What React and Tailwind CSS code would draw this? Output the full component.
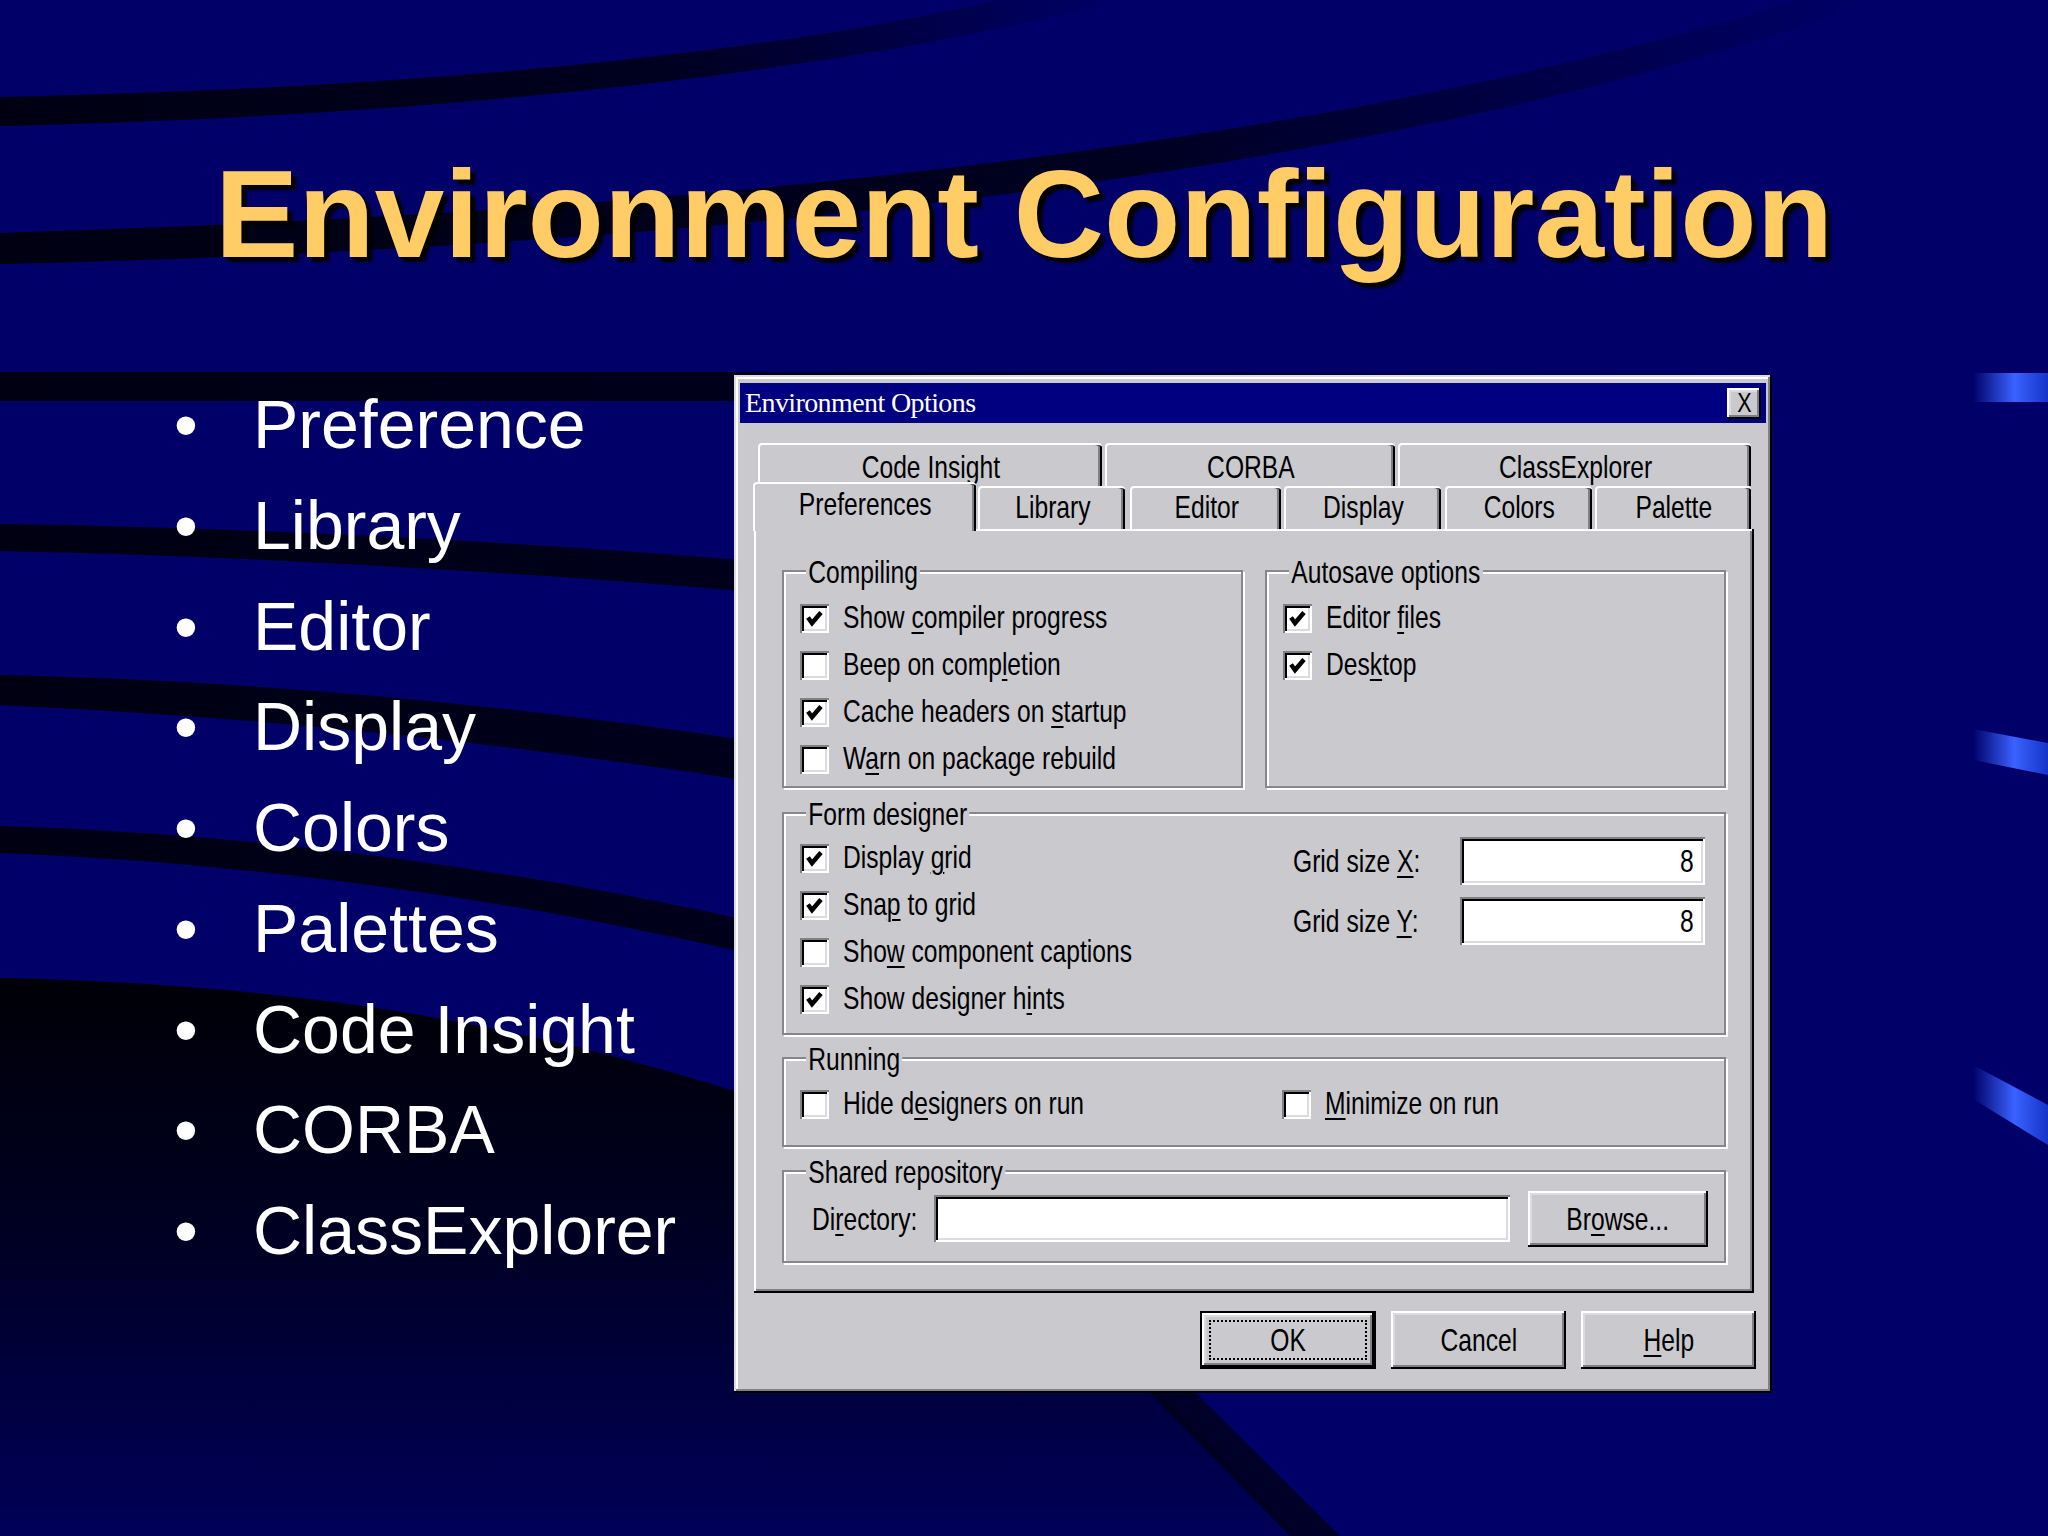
const FACE = "bg-[#c9c9ce]";
const RAISED =
  "shadow-[inset_-2px_-2px_0_#000,inset_2px_2px_0_#fff,inset_-4px_-4px_0_#808084,inset_4px_4px_0_#dcdce0]";
const SUNKEN =
  "shadow-[inset_2px_2px_0_#808084,inset_-2px_-2px_0_#fff,inset_4px_4px_0_#000,inset_-4px_-4px_0_#dcdce0]";

// the old dialog font is tall and narrow: squeeze Liberation Sans
const T = ({ children, o = "origin-left", className = "" }) => (
  <span className={`inline-block whitespace-nowrap leading-none scale-x-[0.77] ${o} ${className}`}>{children}</span>
);

const Mn = ({ t, u }) =>
  u == null ? (
    t
  ) : (
    <>
      {t.slice(0, u)}
      <span className="underline decoration-2 underline-offset-[4px]">{t[u]}</span>
      {t.slice(u + 1)}
    </>
  );

const Background = () => (
  <svg className="absolute inset-0" width="2048" height="1536" viewBox="0 0 2048 1536">
    <defs>
      <linearGradient id="fadeTop" x1="0" x2="1" y1="0" y2="0">
        <stop offset="0" stopColor="#00000e" stopOpacity="0.95" />
        <stop offset="0.6" stopColor="#00000e" stopOpacity="0.8" />
        <stop offset="1" stopColor="#00000e" stopOpacity="0" />
      </linearGradient>
      <linearGradient id="fadeLeft" gradientUnits="userSpaceOnUse" x1="0" x2="1772" y1="0" y2="0">
        <stop offset="0" stopColor="#00000e" stopOpacity="0.95" />
        <stop offset="0.42" stopColor="#00000e" stopOpacity="0.85" />
        <stop offset="1" stopColor="#00000e" stopOpacity="0" />
      </linearGradient>
      <linearGradient id="lowDark" gradientUnits="userSpaceOnUse" x1="0" x2="0" y1="978" y2="1536">
        <stop offset="0" stopColor="#000006" stopOpacity="1" />
        <stop offset="0.45" stopColor="#000010" stopOpacity="0.8" />
        <stop offset="1" stopColor="#000018" stopOpacity="0.2" />
      </linearGradient>
      <linearGradient id="shine" gradientUnits="userSpaceOnUse" x1="1973" x2="2048" y1="0" y2="0">
        <stop offset="0" stopColor="#000068" />
        <stop offset="0.55" stopColor="#3a62ff" />
        <stop offset="1" stopColor="#1634c8" />
      </linearGradient>
    </defs>
    <rect width="2048" height="1536" fill="#000068" />
    <path d="M0,97 C420,88 760,55 1000,0 L1120,0 C860,70 450,116 0,126 Z" fill="url(#fadeTop)" />
    <path d="M0,233 C620,214 1280,160 1800,0 L1880,0 C1360,186 660,248 0,264 Z" fill="url(#fadeTop)" />
    <path d="M0,372 L2048,372 L2048,401 L0,401 Z" fill="url(#fadeLeft)" />
    <path d="M0,524 C700,534 1500,622 2048,743 L2048,775 C1500,656 700,566 0,551 Z" fill="url(#fadeLeft)" />
    <path d="M0,675 C700,690 1500,850 2048,1105 L2048,1145 C1500,892 700,736 0,705 Z" fill="url(#fadeLeft)" />
    <path d="M0,826 C700,848 1400,1060 2048,1420 L2048,1460 C1400,1100 700,880 0,853 Z" fill="url(#fadeLeft)" />
    <path d="M0,978 C350,985 620,1040 900,1150 L1160,1393 L1300,1536 L0,1536 Z" fill="url(#lowDark)" />
    <path d="M1150,1393 L1196,1393 L1340,1536 L1290,1536 Z" fill="#000018" fillOpacity="0.8" />
    <path d="M1973,373 L2048,373 L2048,402 L1973,402 Z" fill="url(#shine)" />
    <path d="M1973,729 L2048,743 L2048,775 L1973,760 Z" fill="url(#shine)" />
    <path d="M1973,1065 L2048,1105 L2048,1145 L1973,1099 Z" fill="url(#shine)" />
  </svg>
);

const Check = ({ on }) => (
  <span className={`w-[29px] h-[29px] shrink-0 bg-white ${SUNKEN} flex items-center justify-center`}>
    {on && (
      <svg width="29" height="29" viewBox="0 0 29 29">
        <path d="M8 13.5 L12 19 L21 8.5" stroke="#000" strokeWidth="4.5" fill="none" />
      </svg>
    )}
  </span>
);

const CheckRow = ({ on, t, u, className = "" }) => (
  <div className={`h-[47px] flex items-center ${className}`}>
    <Check on={on} />
    <T className="ml-[14px] mb-[3px]">
      <Mn t={t} u={u} />
    </T>
  </div>
);

const Group = ({ label, className = "", children }) => (
  <div
    className={`relative border-2 border-[#87878b] shadow-[inset_2px_2px_0_#fff,2px_2px_0_#fff] ${className}`}
  >
    <span
      className={`absolute left-[22px] top-[-15px] px-[3px] ${FACE} leading-[30px] whitespace-nowrap scale-x-[0.77] origin-left`}
    >
      {label}
    </span>
    {children}
  </div>
);

const Button = ({ w, h = 58, children, primary }) =>
  primary ? (
    <div className={`border-2 border-black ${FACE} ${RAISED} flex p-[7px]`} style={{ width: w, height: h }}>
      <div className="flex-1 border-2 border-dotted border-black flex items-center justify-center">
        <T o="origin-center">{children}</T>
      </div>
    </div>
  ) : (
    <div className={`${FACE} ${RAISED} flex items-center justify-center`} style={{ width: w, height: h }}>
      <T o="origin-center">{children}</T>
    </div>
  );

const Field = ({ w, h, value }) => (
  <div
    className={`shrink-0 bg-white ${SUNKEN} flex items-center justify-end pr-[11px]`}
    style={{ width: w, height: h }}
  >
    {value && <T o="origin-right">{value}</T>}
  </div>
);

const topTabs = [
  { label: "Code Insight", w: 344 },
  { label: "CORBA", w: 290 },
  { label: "ClassExplorer", w: 353 },
];

const lowTabs = [
  { label: "Library", w: 147, ml: 2 },
  { label: "Editor", w: 151, ml: 5 },
  { label: "Display", w: 157, ml: 3 },
  { label: "Colors", w: 147, ml: 4 },
  { label: "Palette", w: 156, ml: 3 },
];

const TAB =
  "border-t-2 border-l-2 border-white rounded-t-[4px] shadow-[inset_-2px_0_0_#000,inset_-4px_0_0_#808084] flex justify-center";

const Dialog = () => (
  <div
    className={`mt-[1px] w-[1038px] h-[1018px] shrink-0 ${FACE} shadow-[inset_-2px_-2px_0_#000,inset_2px_2px_0_#dcdce0,inset_-4px_-4px_0_#808084,inset_4px_4px_0_#fff] pt-[8px] px-[6px] flex flex-col text-[32px] text-black`}
  >
    <div className="h-[40px] bg-[#000080] flex items-center justify-between pl-[5px] pr-[5px]">
      <span className="font-['Liberation_Serif',serif] text-[28px] text-white leading-none tracking-[-0.6px]">
        Environment Options
      </span>
      <span className={`w-[34px] h-[31px] ${FACE} ${RAISED} flex items-center justify-center pb-[1px]`}>
        <T o="origin-center" className="text-[28px]">X</T>
      </span>
    </div>

    <div className="pl-[14px] pr-[12px] pt-[20px] flex flex-col">
      <div className="flex h-[43px] pl-[4px] gap-[3px]">
        {topTabs.map((t) => (
          <div key={t.label} className={`${TAB} items-start pt-[6px]`} style={{ width: t.w }}>
            <T o="origin-center">{t.label}</T>
          </div>
        ))}
      </div>

      <div className="flex items-end h-[43px]">
        <div
          className={`relative z-10 ml-[-1px] h-[49px] mb-[-2px] ${FACE} ${TAB} items-center pb-[8px]`}
          style={{ width: 223 }}
        >
          <T o="origin-center">Preferences</T>
        </div>
        {lowTabs.map((t) => (
          <div
            key={t.label}
            className={`${FACE} ${TAB} h-[43px] items-center pb-[3px]`}
            style={{ width: t.w, marginLeft: t.ml }}
          >
            <T o="origin-center">{t.label}</T>
          </div>
        ))}
      </div>

      <div className="h-[764px] shadow-[inset_-2px_-2px_0_#000,inset_2px_2px_0_#fff,inset_-4px_-4px_0_#808084] px-[28px] pt-[41px] flex flex-col">
        <div className="flex gap-[22px] h-[218px]">
          <Group label="Compiling" className="w-[461px] pt-[23px] pl-[16px]">
            <CheckRow on t="Show compiler progress" u={5} />
            <CheckRow t="Beep on completion" u={12} />
            <CheckRow on t="Cache headers on startup" u={17} />
            <CheckRow t="Warn on package rebuild" u={1} />
          </Group>
          <Group label="Autosave options" className="flex-1 pt-[23px] pl-[16px]">
            <CheckRow on t="Editor files" u={7} />
            <CheckRow on t="Desktop" u={3} />
          </Group>
        </div>

        <Group label="Form designer" className="mt-[24px] h-[223px] flex">
          <div className="w-[509px] shrink-0 pl-[16px] pt-[21px]">
            <CheckRow on t="Display grid" u={8} />
            <CheckRow on t="Snap to grid" u={3} />
            <CheckRow t="Show component captions" u={3} />
            <CheckRow on t="Show designer hints" u={15} />
          </div>
          <div className="pt-[23px] flex flex-col gap-[12px]">
            <div className="flex items-center h-[48px]">
              <span className="w-[167px] shrink-0">
                <T>
                  <Mn t="Grid size X:" u={10} />
                </T>
              </span>
              <Field w={245} h={48} value="8" />
            </div>
            <div className="flex items-center h-[48px]">
              <span className="w-[167px] shrink-0">
                <T>
                  <Mn t="Grid size Y:" u={10} />
                </T>
              </span>
              <Field w={245} h={48} value="8" />
            </div>
          </div>
        </Group>

        <Group label="Running" className="mt-[22px] h-[90px] flex pl-[16px] pt-[22px]">
          <CheckRow t="Hide designers on run" u={6} className="w-[482px] shrink-0" />
          <CheckRow t="Minimize on run" u={0} />
        </Group>

        <Group label="Shared repository" className="mt-[23px] h-[93px] flex items-center pl-[28px] pt-[4px]">
          <span className="w-[122px] shrink-0">
            <T>
              <Mn t="Directory:" u={2} />
            </T>
          </span>
          <Field w={576} h={47} value="" />
          <div className="ml-[18px]">
            <Button w={180} h={56}>
              <Mn t="Browse..." u={2} />
            </Button>
          </div>
        </Group>
      </div>

      <div className="flex justify-end gap-[15px] mt-[18px] mr-[-2px]">
        <Button w={176} primary>
          OK
        </Button>
        <Button w={175}>Cancel</Button>
        <Button w={175}>
          <Mn t="Help" u={0} />
        </Button>
      </div>
    </div>
  </div>
);

const items = [
  "Preference",
  "Library",
  "Editor",
  "Display",
  "Colors",
  "Palettes",
  "Code Insight",
  "CORBA",
  "ClassExplorer",
];

export default function App() {
  return (
    <div className="relative w-[2048px] h-[1536px] overflow-hidden bg-[#000068] font-['Liberation_Sans',sans-serif]">
      <Background />
      <div className="relative flex flex-col">
        <h1 className="pt-[151px] text-center text-[125px] leading-none font-bold text-[#ffcc66] [text-shadow:5px_5px_3px_#000]">
          Environment Configuration
        </h1>
        <div className="flex mt-[98px] pl-[174px]">
          <ul className="w-[560px] shrink-0 text-white text-[68px]">
            {items.map((it) => (
              <li key={it} className="flex h-[100.75px] leading-[100.75px] whitespace-nowrap">
                <span className="w-[79px] shrink-0">•</span>
                <span>{it}</span>
              </li>
            ))}
          </ul>
          <Dialog />
        </div>
      </div>
    </div>
  );
}
